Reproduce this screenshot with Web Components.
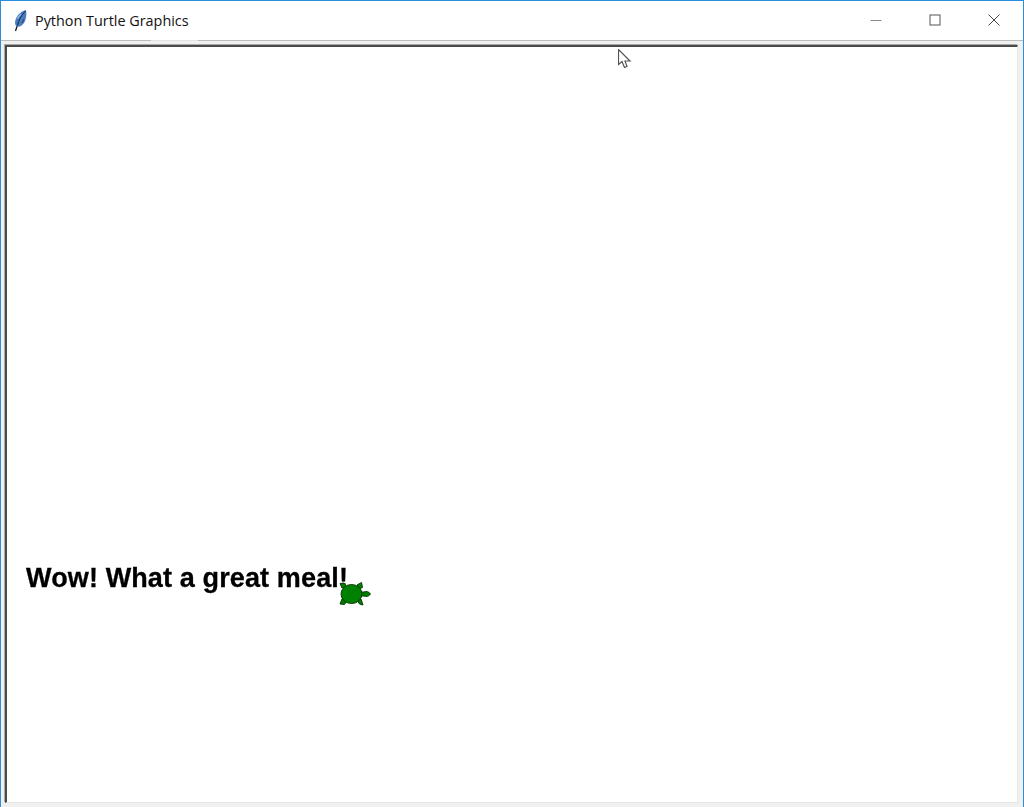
<!DOCTYPE html>
<html lang="en">
<head>
  <meta charset="UTF-8">
  <title>Python Turtle Graphics</title>
  <style type="text/css">
    html, body { margin: 0; height: 100%; background: #fff; overflow: hidden; }
  </style>
</head>
<body>
  <turtle-window>
    <title-bar>Python Turtle Graphics</title-bar>
    <turtle-canvas>
      <canvas-text style="left: 19px; top: 515px">Wow! What a great meal!</canvas-text>
      <turtle-sprite style="left: 332px; top: 534px"></turtle-sprite>
      <mouse-cursor style="left: 611px; top: 2px"></mouse-cursor>
    </turtle-canvas>
  </turtle-window>
  <script type="text/javascript">
    const define = (name, html) => customElements.define(name, class extends HTMLElement {
      constructor() {
        super()
        this.attachShadow({ mode: "open" }).innerHTML = html
      }
    })

    define("turtle-window", `
      <style type="text/css">
        :host {
          display: flex;
          flex-direction: column;
          box-sizing: border-box;
          height: 807px;
          border: 1px solid #2b90d9;
          border-bottom: 0;
          background: #f0f0f0;
          font-family: "Open Sans", "Noto Sans", sans-serif;
        }
      </style>
      <slot></slot>
    `)

    define("title-bar", `
      <style type="text/css">
        :host {
          display: flex;
          align-items: center;
          flex: none;
          height: 39px;
          background: #fff;
          border-bottom: 1px solid #bdbdbd;
          font-size: 14.4px;
          color: #111;
          position: relative;
        }
        :host::after {
          content: "";
          position: absolute;
          left: 150px;
          bottom: -1px;
          width: 47px;
          height: 1px;
          background: #e4e4e4;
        }
        .icon { width: 16px; height: 24px; margin: 0 6px 0 12px; flex: none; }
        .title { flex: 1; margin-top: -1px; white-space: nowrap; }
        .btn {
          display: flex;
          align-items: center;
          justify-content: center;
          width: 59px;
          height: 100%;
          flex: none;
        }
        .btn svg { width: 12px; height: 12px; margin-top: -1px; }
      </style>
      <svg class="icon" viewBox="0 0 16 24">
        <path d="M2.500 22 L4.500 16" stroke="#1a1a1a" stroke-width="1.300" fill="none"/>
        <path d="M3.500 17.500 C0.500 14.500 2.500 8.500 6 5 C8.500 2.500 11 1.500 13 1 C14 5.500 13 10.500 11 14 C9 17 6 18.500 3.500 17.500 Z" fill="#4a7cc0"/>
        <path d="M4.500 16.500 C5.500 11.500 8 6.500 12.500 2" stroke="#14233f" stroke-width="1" fill="none"/>
        <path d="M4.500 9.500 L8 5" stroke="#a8c8ee" stroke-width="1.200" fill="none"/>
        <path d="M9 14 L11 10" stroke="#20406f" stroke-width="1" fill="none"/>
      </svg>
      <div class="title"><slot></slot></div>
      <div class="btn"><svg viewBox="0 0 12 12"><path d="M0.500 6.500 H11.500" stroke="#8a8a8a" stroke-width="1"/></svg></div>
      <div class="btn"><svg viewBox="0 0 12 12"><rect x="1" y="1" width="10" height="10" fill="none" stroke="#555" stroke-width="1"/></svg></div>
      <div class="btn"><svg viewBox="0 0 12 12"><path d="M0.500 0.500 L11.500 11.500 M11.500 0.500 L0.500 11.500" stroke="#444" stroke-width="1"/></svg></div>
    `)

    define("turtle-canvas", `
      <style type="text/css">
        :host {
          display: block;
          position: relative;
          flex: 1;
          margin: 4px 5px 4px 4px;
          background: #fff;
          border-top: 2px solid #4a4a4a;
          border-left: 2px solid #4a4a4a;
          border-right: 1px solid #e6e6e6;
          border-bottom: 1px solid #e6e6e6;
          box-shadow: -1px -1px 0 #a8a8a8;
        }
      </style>
      <slot></slot>
    `)

    define("canvas-text", `
      <style type="text/css">
        :host {
          position: absolute;
          font: bold 27px/32px "Liberation Sans", Arial, sans-serif;
          letter-spacing: 0.13px;
          color: #000;
          white-space: nowrap;
          -webkit-text-stroke: 0.3px #000;
          filter: blur(0.4px);
        }
      </style>
      <slot></slot>
    `)

    define("turtle-sprite", `
      <style type="text/css">
        :host { position: absolute; width: 32px; height: 26px; }
        svg { display: block; width: 100%; height: 100%; }
      </style>
      <svg viewBox="0 0 32 26">
        <path d="M1 2.500 L5 2 L8 6 L3 7 Z M1 23 L3 18 L8 19.500 L5.500 23.500 Z M18 4 L22.500 1.500 L23.500 6.500 L20 8 Z M18.500 20 L22 18 L24 24 L20.500 23 Z" fill="#008000" stroke="#0b3d0b" stroke-width="1"/>
        <path d="M20 11 H25 C27 10 30 10.500 31.500 13 C30 15.500 27 16 25 15 H20 Z" fill="#008000" stroke="#0b3d0b" stroke-width="1"/>
        <ellipse cx="12.500" cy="13" rx="10.500" ry="9.500" fill="#008000" stroke="#0b3d0b" stroke-width="1"/>
      </svg>
    `)

    define("mouse-cursor", `
      <style type="text/css">
        :host { position: absolute; width: 14px; height: 21px; }
        svg { display: block; width: 100%; height: 100%; }
      </style>
      <svg viewBox="0 0 14 21">
        <path d="M0.500 0.500 V15.500 L4 12.500 L6.500 18.500 L9 17.500 L7 12 H12 Z" fill="#fff" stroke="#555" stroke-width="1.200"/>
      </svg>
    `)
  </script>
</body>
</html>
